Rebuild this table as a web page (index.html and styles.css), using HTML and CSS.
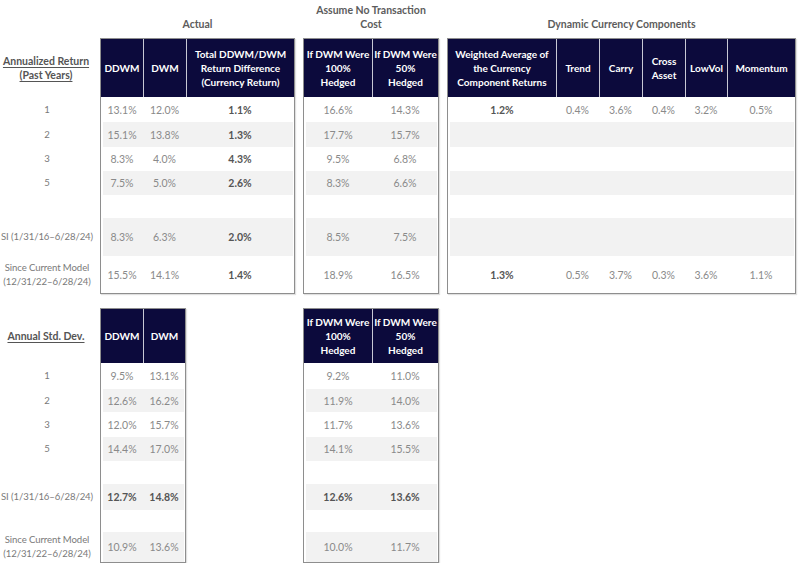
FILE: index.html
```html
<!DOCTYPE html>
<html>
<head>
<meta charset="utf-8">
<link rel="stylesheet" href="styles.css">
</head>
<body>
<div class="page">
  <section class="block top">
    <div class="col labels">
      <div class="title"></div>
      <div class="tbl plain">
        <div class="head"><span class="u">Annualized Return<br>(Past Years)</span></div>
        <div class="body">
          <div class="row">1</div>
          <div class="row">2</div>
          <div class="row">3</div>
          <div class="row">5</div>
          <div class="row"></div>
          <div class="row">SI (1/31/16–6/28/24)</div>
          <div class="row">Since Current Model<br>(12/31/22–6/28/24)</div>
        </div>
      </div>
    </div>

    <div class="col">
      <div class="title">Actual</div>
      <div class="tbl t-actual">
        <div class="head"><div>DDWM</div><div>DWM</div><div>Total DDWM/DWM<br>Return Difference<br>(Currency Return)</div></div>
        <div class="body">
          <div class="row"><span>13.1%</span><span>12.0%</span><b>1.1%</b></div>
          <div class="row"><span>15.1%</span><span>13.8%</span><b>1.3%</b></div>
          <div class="row"><span>8.3%</span><span>4.0%</span><b>4.3%</b></div>
          <div class="row"><span>7.5%</span><span>5.0%</span><b>2.6%</b></div>
          <div class="row"></div>
          <div class="row"><span>8.3%</span><span>6.3%</span><b>2.0%</b></div>
          <div class="row"><span>15.5%</span><span>14.1%</span><b>1.4%</b></div>
        </div>
      </div>
    </div>

    <div class="col">
      <div class="title">Assume No Transaction<br>Cost</div>
      <div class="tbl t-hedge">
        <div class="head"><div>If DWM Were<br>100%<br>Hedged</div><div>If DWM Were<br>50%<br>Hedged</div></div>
        <div class="body">
          <div class="row"><span>16.6%</span><span>14.3%</span></div>
          <div class="row"><span>17.7%</span><span>15.7%</span></div>
          <div class="row"><span>9.5%</span><span>6.8%</span></div>
          <div class="row"><span>8.3%</span><span>6.6%</span></div>
          <div class="row"></div>
          <div class="row"><span>8.5%</span><span>7.5%</span></div>
          <div class="row"><span>18.9%</span><span>16.5%</span></div>
        </div>
      </div>
    </div>

    <div class="col">
      <div class="title">Dynamic Currency Components</div>
      <div class="tbl t-dyn">
        <div class="head"><div>Weighted Average of<br>the Currency<br>Component Returns</div><div>Trend</div><div>Carry</div><div>Cross<br>Asset</div><div>LowVol</div><div>Momentum</div></div>
        <div class="body">
          <div class="row"><b>1.2%</b><span>0.4%</span><span>3.6%</span><span>0.4%</span><span>3.2%</span><span>0.5%</span></div>
          <div class="row"></div>
          <div class="row"></div>
          <div class="row"></div>
          <div class="row"></div>
          <div class="row"></div>
          <div class="row"><b>1.3%</b><span>0.5%</span><span>3.7%</span><span>0.3%</span><span>3.6%</span><span>1.1%</span></div>
        </div>
      </div>
    </div>
  </section>

  <section class="block bottom">
    <div class="col labels">
      <div class="tbl plain">
        <div class="head"><span class="u">Annual Std. Dev.</span></div>
        <div class="body">
          <div class="row">1</div>
          <div class="row">2</div>
          <div class="row">3</div>
          <div class="row">5</div>
          <div class="row"></div>
          <div class="row">SI (1/31/16–6/28/24)</div>
          <div class="row"></div>
          <div class="row">Since Current Model<br>(12/31/22–6/28/24)</div>
        </div>
      </div>
    </div>

    <div class="col">
      <div class="tbl t-std">
        <div class="head"><div>DDWM</div><div>DWM</div></div>
        <div class="body">
          <div class="row"><span>9.5%</span><span>13.1%</span></div>
          <div class="row"><span>12.6%</span><span>16.2%</span></div>
          <div class="row"><span>12.0%</span><span>15.7%</span></div>
          <div class="row"><span>14.4%</span><span>17.0%</span></div>
          <div class="row"></div>
          <div class="row"><b>12.7%</b><b>14.8%</b></div>
          <div class="row"></div>
          <div class="row"><span>10.9%</span><span>13.6%</span></div>
        </div>
      </div>
    </div>

    <div class="col">
      <div class="tbl t-hedge">
        <div class="head"><div>If DWM Were<br>100%<br>Hedged</div><div>If DWM Were<br>50%<br>Hedged</div></div>
        <div class="body">
          <div class="row"><span>9.2%</span><span>11.0%</span></div>
          <div class="row"><span>11.9%</span><span>14.0%</span></div>
          <div class="row"><span>11.7%</span><span>13.6%</span></div>
          <div class="row"><span>14.1%</span><span>15.5%</span></div>
          <div class="row"></div>
          <div class="row"><b>12.6%</b><b>13.6%</b></div>
          <div class="row"></div>
          <div class="row"><span>10.0%</span><span>11.7%</span></div>
        </div>
      </div>
    </div>
  </section>
</div>
</body>
</html>
```

FILE: styles.css
```css
* { box-sizing: border-box; }

html, body {
  margin: 0;
  padding: 0;
  background: #ffffff;
}

body {
  font-family: Lato, "Open Sans", sans-serif;
  font-size: 10.5px;
  line-height: 14px;
  color: #8a8a8a;
}

.page {
  width: 800px;
}

.block {
  display: grid;
  grid-template-columns: 92px 195px 136px 349px;
  column-gap: 8px;
  align-items: start;
}

.bottom {
  margin-top: 14px;
}

.col {
  display: flex;
  flex-direction: column;
}

.title {
  height: 38px;
  display: flex;
  align-items: flex-end;
  justify-content: center;
  padding-bottom: 7px;
  text-align: center;
  font-weight: bold;
  font-size: 10.5px;
  color: #5c5c5c;
  white-space: nowrap;
}

.tbl {
  border: 1px solid #8e8e8e;
  box-shadow: 1px 1px 1px rgba(0, 0, 0, 0.12);
  background: #fff;
}

.tbl.plain {
  border-color: transparent;
  box-shadow: none;
  background: transparent;
}

.head {
  height: 58px;
  display: grid;
  background: #0c0a3c;
  color: #ffffff;
  font-weight: bold;
  font-size: 10px;
  white-space: nowrap;
}

.bottom .head {
  height: 54px;
}

.head > div {
  display: flex;
  align-items: center;
  justify-content: center;
  text-align: center;
}

.head > div + div {
  border-left: 1px solid #c8c8d4;
}

.plain .head {
  background: transparent;
  display: flex;
  align-items: center;
  justify-content: center;
  text-align: center;
  color: #555;
  font-size: 10.5px;
}

.u {
  text-decoration: underline;
  text-underline-offset: 2px;
}

.body {
  display: grid;
}

.top .body {
  grid-template-rows: 25px 25px 24px 24px 23px 38px 37px;
}

.bottom .body {
  grid-template-rows: 26px 23px 25px 24px 23px 26px 22px 30px;
}

.row {
  display: grid;
  align-items: center;
  justify-items: center;
  text-align: center;
  white-space: nowrap;
}

.tbl:not(.plain) .row:nth-child(even) {
  background: #f2f2f2;
  box-shadow: inset 2px 0 #fff, inset -1px 0 #fff;
}

.plain .row {
  color: #7a7a7a;
  font-size: 9.6px;
  letter-spacing: -0.1px;
}

.row b {
  color: #555;
  font-weight: bold;
}

.t-actual .head,
.t-actual .row {
  grid-template-columns: 42px 43px 1fr;
}

.t-hedge .head,
.t-hedge .row {
  grid-template-columns: 68px 1fr;
}

.t-dyn .head,
.t-dyn .row {
  grid-template-columns: 108px 43px 43px 43px 42px 1fr;
}

.t-std {
  width: 86px;
}

.t-std .head,
.t-std .row {
  grid-template-columns: 42px 1fr;
}
```
